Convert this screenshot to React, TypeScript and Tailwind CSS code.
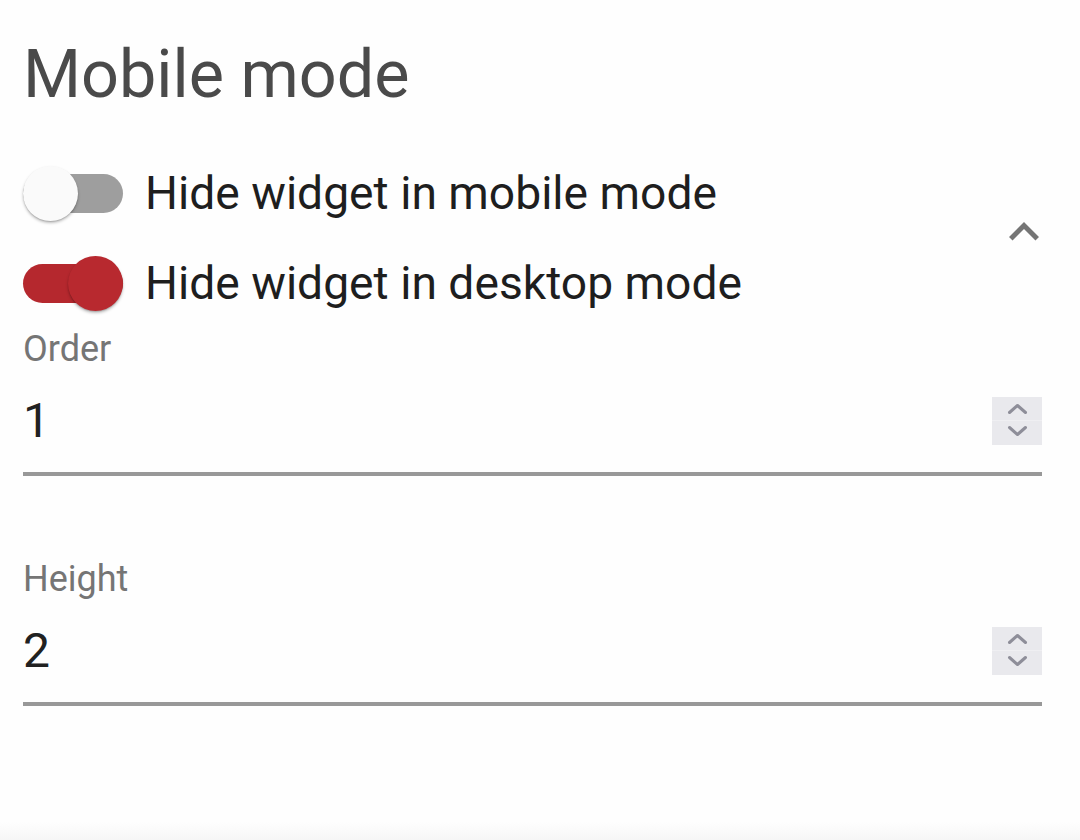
import React from "react";

function Toggle({ on }: { on: boolean }) {
  return (
    <div className="relative w-[100px] h-[39px] shrink-0">
      <div
        className={
          "w-full h-full rounded-full " + (on ? "bg-[#b5282e]" : "bg-[#9e9e9e]")
        }
      />
      <div
        className={
          "absolute top-[-8px] w-[55px] h-[55px] rounded-full shadow-[0_2px_3px_rgba(0,0,0,0.25),0_1px_1px_rgba(0,0,0,0.12)] " +
          (on ? "right-0 bg-[#b8292f]" : "left-0 bg-[#fafafa]")
        }
      />
    </div>
  );
}

function Spinner() {
  return (
    <div className="w-[50px] h-[48px] bg-[#e9e9ed] shrink-0">
      <svg width="50" height="48" viewBox="0 0 50 48">
        <line x1="0" y1="23.5" x2="50" y2="23.5" stroke="#efeff2" strokeWidth="1" />
        <polyline
          points="17.5,15.5 25.5,8.5 33.5,15.5"
          fill="none"
          stroke="#8e8e99"
          strokeWidth="3"
          strokeLinecap="round"
          strokeLinejoin="round"
        />
        <polyline
          points="17.5,30.5 25.5,37.5 33.5,30.5"
          fill="none"
          stroke="#8e8e99"
          strokeWidth="3"
          strokeLinecap="round"
          strokeLinejoin="round"
        />
      </svg>
    </div>
  );
}

function NumberField({ label, value }: { label: string; value: string }) {
  return (
    <div className="flex flex-col">
      <div className="text-[36px] leading-[36px] text-[#757575]">{label}</div>
      <div className="mt-[30px] flex items-center justify-between h-[48px]">
        <span className="text-[48px] leading-[48px] text-[#212121]">{value}</span>
        <Spinner />
      </div>
      <div className="mt-[27px] h-[4px] bg-[#989898]" />
    </div>
  );
}

export default function App() {
  return (
    <div
      className="h-[840px] w-[1080px] bg-[#fefefe] flex flex-col"
      style={{ fontFamily: "Roboto, 'Liberation Sans', sans-serif" }}
    >
      <div className="flex-1 pl-[23px] pr-[38px] pt-[41px] flex flex-col">
        <h1 className="text-[66.5px] leading-[66px] h-[66px] text-[#4a4a4a] font-normal">
          Mobile mode
        </h1>
        <div className="mt-[41px] flex justify-between">
          <div className="flex flex-col">
            <div className="h-[90px] flex items-center gap-[22px]">
              <Toggle on={false} />
              <span className="text-[46.2px] leading-none text-[#1e1e1e]">
                Hide widget in mobile mode
              </span>
            </div>
            <div className="h-[90px] flex items-center gap-[22px]">
              <Toggle on={true} />
              <span className="text-[46.2px] leading-none text-[#1e1e1e]">
                Hide widget in desktop mode
              </span>
            </div>
          </div>
          <svg
            className="mt-[54px] mr-[-12px] shrink-0"
            width="60"
            height="60"
            viewBox="0 0 24 24"
          >
            <path d="M12 8l-6 6 1.41 1.41L12 10.83l4.59 4.58L18 14z" fill="#757575" />
          </svg>
        </div>
        <div className="mt-[3px]">
          <NumberField label="Order" value="1" />
        </div>
        <div className="mt-[85px]">
          <NumberField label="Height" value="2" />
        </div>
      </div>
      <div className="h-[18px] bg-gradient-to-b from-[#fefefe] to-[#f6f6f6]" />
    </div>
  );
}
